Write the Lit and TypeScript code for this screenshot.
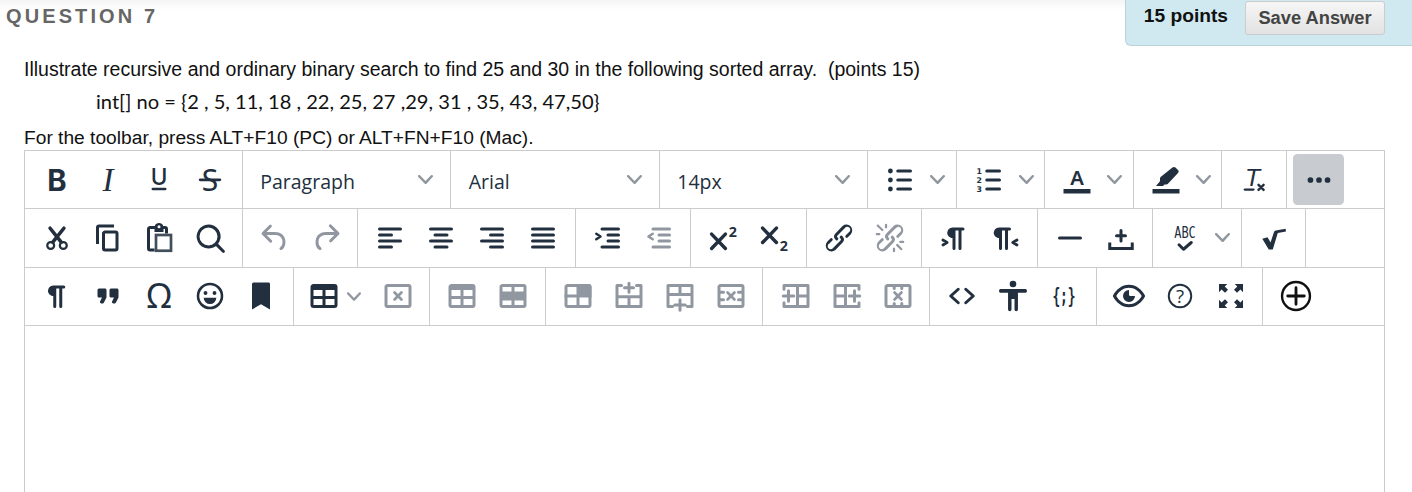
import { LitElement, html, svg, css } from 'lit';
import { customElement } from 'lit/decorators.js';

interface Item {
  i?: string;
  off?: boolean;
  chev?: boolean;
  label?: string;
  active?: boolean;
  cls?: string;
}

const bars = (list: number[][]) =>
  list.map(([x, y, w, h = 2]) => svg`<rect x=${x} y=${y} width=${w} height=${h} rx="1"/>`);

const line = (d: string, w = 2) =>
  svg`<path d=${d} fill="none" stroke="currentColor" stroke-width=${w} stroke-linecap="round" stroke-linejoin="round"/>`;

const label = (x: number, y: number, t: string, size: number, weight = 400, family = 'Open Sans') =>
  svg`<text x=${x} y=${y} text-anchor="middle" font-size=${size} font-weight=${weight} font-family=${family + ', sans-serif'}>${t}</text>`;

const grid = svg`<path fill-rule="evenodd" d="M19 4a2 2 0 012 2v12a2 2 0 01-2 2H5a2 2 0 01-2-2V6c0-1.1.9-2 2-2h14zM5 14v4h6v-4H5zm14 0h-6v4h6v-4zm0-6h-6v4h6V8zM5 12h6V8H5v4z"/>`;
const frame = svg`<path fill-rule="evenodd" d="M19 4a2 2 0 012 2v12a2 2 0 01-2 2H5a2 2 0 01-2-2V6c0-1.1.9-2 2-2h14zM5 6v12h14V6H5z"/>`;

const pilcrow = svg`<path d="M11 5h7a1 1 0 010 2h-1v12a1 1 0 01-2 0V7h-2v12a1 1 0 01-2 0v-7c-.5 0-1 0-1.4-.3A3.4 3.4 0 017.8 10a3.3 3.3 0 010-2.8 3.4 3.4 0 011.8-1.8L11 5z"/>`;

const icons: Record<string, unknown> = {
  bold: label(12, 19, 'B', 19.5, 700, 'Inter'),
  italic: svg`<text x="12" y="19" text-anchor="middle" font-size="22" font-style="italic" font-family="Liberation Serif, serif">I</text>`,
  underline: svg`${label(12, 15.6, 'U', 15, 500, 'Inter')}${bars([[7, 17.2, 10, 1.7]])}`,
  strike: svg`${label(12, 19, 'S', 20, 400, 'Noto Sans')}${bars([[4.5, 11, 15, 1.8]])}`,
  bullist: svg`<circle cx="5.6" cy="6" r="1.6"/><circle cx="5.6" cy="12" r="1.6"/><circle cx="5.6" cy="18" r="1.6"/>${bars([[9.5, 5, 10.5], [9.5, 11, 10.5], [9.5, 17, 10.5]])}`,
  numlist: svg`${label(5.5, 8, '1', 5.2, 700, 'DejaVu Sans')}${label(5.5, 14, '2', 5.2, 700, 'DejaVu Sans')}${label(5.5, 20, '3', 5.2, 700, 'DejaVu Sans')}${bars([[9.5, 5, 10.5], [9.5, 11, 10.5], [9.5, 17, 10.5]])}`,
  forecolor: svg`${label(12, 15.3, 'A', 13.5, 600, 'Noto Sans')}<rect x="3" y="18" width="18" height="3"/>`,
  hilite: svg`<path d="M16.300 3.700a1.500 1.500 0 012 0l1.700 1.700c.6.6.6 1.500 0 2l-6.700 7.100c-.3.3-.7.5-1.100.5H11l-1 1H5.300l2.700-3.200v-1.800c0-.4.2-.8.4-1z"/><rect x="3" y="18" width="18" height="3"/>`,
  removeformat: svg`<text x="11" y="16" text-anchor="middle" font-size="16.500" font-style="italic" font-family="Liberation Sans, sans-serif">T</text>${bars([[5, 17.600, 7.500, 1.500]])}${line('M15 15.200l3.400 3.400M18.400 15.200L15 18.600', 1.600)}`,
  more: svg`<circle cx="6.300" cy="12" r="1.900"/><circle cx="12" cy="12" r="1.900"/><circle cx="17.700" cy="12" r="1.900"/>`,
  cut: svg`${line('M16.600 5.500L9.200 14.800M7.400 5.500L14.800 14.800', 2.400)}<circle cx="7.800" cy="17" r="2.300" fill="none" stroke="currentColor" stroke-width="1.500"/><circle cx="16.200" cy="17" r="2.300" fill="none" stroke="currentColor" stroke-width="1.500"/>`,
  copy: svg`<path fill-rule="evenodd" d="M16 3H6a2 2 0 00-2 2v11h2V5h10V3zm1 4a2 2 0 012 2v10a2 2 0 01-2 2H10a2 2 0 01-2-2V9c0-1.1.9-2 2-2h7zm0 12V9h-7v10h7z"/>`,
  paste: svg`<path fill-rule="evenodd" d="M9.200 4a3 3 0 015.600 0H16a2 2 0 012 2v3h-2V6h-1v2H9V6H6v13h3v2H6a2 2 0 01-2-2V6c0-1.1.9-2 2-2h3.200zM12 3.500a1 1 0 100 2 1 1 0 000-2z"/><rect x="10" y="10" width="10" height="10.500" fill="none" stroke="currentColor" stroke-width="1.800" opacity=".85"/>`,
  search: svg`<path fill-rule="evenodd" d="M16 17.300a8 8 0 111.400-1.400l4.300 4.400a1 1 0 01-1.400 1.400l-4.400-4.300zm-5-.3a6 6 0 100-12 6 6 0 000 12z"/>`,
  undo: svg`<path d="M6.400 8H12c3.700 0 6.200 2 6.800 5.100.6 2.700-.4 5.600-2.300 6.800a1 1 0 01-1-1.800c1.100-.6 1.800-2.700 1.400-4.600-.5-2.100-2.100-3.500-4.900-3.500H6.400l3.300 3.300a1 1 0 11-1.400 1.400l-5-5a1 1 0 010-1.400l5-5a1 1 0 011.400 1.400L6.400 8z"/>`,
  redo: svg`<path d="M17.600 10H12c-2.800 0-4.400 1.400-4.900 3.500-.4 2 .3 4 1.400 4.600a1 1 0 11-1 1.800c-2-1.200-2.900-4.100-2.300-6.800.6-3 3-5.100 6.800-5.100h5.600l-3.300-3.300a1 1 0 111.400-1.400l5 5a1 1 0 010 1.400l-5 5a1 1 0 01-1.400-1.400l3.300-3.300z"/>`,
  left: bars([[4, 5, 16], [4, 9, 10], [4, 13, 16], [4, 17, 10]]),
  center: bars([[4, 5, 16], [7, 9, 10], [4, 13, 16], [7, 17, 10]]),
  right: bars([[4, 5, 16], [10, 9, 10], [4, 13, 16], [10, 17, 10]]),
  justify: bars([[4, 5, 16], [4, 9, 16], [4, 13, 16], [4, 17, 16]]),
  indent: svg`${bars([[7, 5, 13], [11, 9, 9], [11, 13, 9], [7, 17, 13]])}${line('M4.200 9.200L7 11l-2.800 1.800', 1.700)}`,
  outdent: svg`${bars([[7, 5, 13], [11, 9, 9], [11, 13, 9], [7, 17, 13]])}${line('M7.800 9.200L5 11M7.800 12.800L5 11', 1.700)}`,
  sup: svg`${line('M4.400 9.400L13.600 19M13.600 9.400L4.400 19', 2.300)}${label(18.500, 11, '2', 9.500, 700, 'Open Sans')}`,
  sub: svg`${line('M4.400 5.400L13.600 15M13.600 5.400L4.400 15', 2.300)}${label(18.500, 20.500, '2', 9.500, 700, 'Open Sans')}`,
  link: svg`<path d="M6.200 12.300a1 1 0 011.400 1.400l-2 2a2 2 0 102.600 2.800l4.800-4.800a1 1 0 000-1.400 1 1 0 111.400-1.300 2.900 2.900 0 010 4L9.600 20a3.900 3.900 0 01-5.500-5.500l2-2zm11.600-.6a1 1 0 01-1.400-1.400l2-2a2 2 0 10-2.600-2.800L11 10.300a1 1 0 000 1.400A1 1 0 119.600 13a2.900 2.900 0 010-4L14.400 4a3.900 3.900 0 015.500 5.500l-2 2z"/>`,
  unlink: svg`<path d="M6.200 12.300a1 1 0 011.400 1.400l-2.100 2a2 2 0 102.700 2.800l4.800-4.800a1 1 0 000-1.400 1 1 0 111.400-1.300 2.900 2.900 0 010 4L9.600 20a3.900 3.900 0 01-5.500-5.500l2-2zm11.600-.6a1 1 0 01-1.400-1.400l2.100-2a2 2 0 10-2.700-2.800L11 10.300a1 1 0 000 1.400A1 1 0 119.600 13a2.900 2.900 0 010-4L14.400 4a3.900 3.900 0 015.500 5.500l-2 2zM7.600 6.300a.8.8 0 01-1 1.100L3.300 4.200a.7.7 0 011-1l3.200 3.100zM5.100 8.600a.8.8 0 010 1.500H3a.8.8 0 010-1.500H5zm5-3.500a.8.8 0 01-1.500 0V3a.8.8 0 011.500 0v2zm6 11.800a.8.8 0 011-1l3.200 3.200a.8.8 0 01-1 1L16 17zm-2.200 2a.8.8 0 011.500 0V21a.8.8 0 01-1.500 0V19zm5-3.500a.7.7 0 110-1.500H21a.8.8 0 010 1.500H19z"/>`,
  ltr: svg`${pilcrow}${line('M4.600 13.400L7.400 15l-2.800 1.600', 1.900)}`,
  rtl: svg`<g transform="translate(-3 0)">${pilcrow}</g>${line('M20 13.400L17.200 15l2.800 1.600', 1.900)}`,
  hr: bars([[4, 11, 16, 2]]),
  insert: svg`${bars([[11, 6, 2, 9], [8, 9.500, 8, 2]])}<path d="M3.500 15h2v3h13v-3h2v5h-17z"/>`,
  spell: svg`<text x="12" y="12" text-anchor="middle" font-size="10.500" textLength="14.400" lengthAdjust="spacingAndGlyphs" font-family="DejaVu Sans Mono, monospace">ABC</text>${line('M8 16.500l3 3 5.200-4.500', 2)}`,
  sqrt: svg`<path d="M4.200 12.500l3.500-1 2 3.500 2.300-7c.2-.6.6-.9 1.200-1l6.500-1.200.3 1.800-5.500 1-3.300 11H8.500z"/>`,
  para: svg`<g transform="translate(-1.500 0)">${pilcrow}</g>`,
  quote: svg`<path d="M7.500 17h.9c.4 0 .7-.2.9-.6L11 13V8c0-.6-.4-1-1-1H6a1 1 0 00-1 1v4c0 .6.4 1 1 1h2l-1.300 2.700a1 1 0 00.8 1.300zm8 0h.9c.4 0 .7-.2.9-.6L19 13V8c0-.6-.4-1-1-1h-4a1 1 0 00-1 1v4c0 .6.4 1 1 1h2l-1.300 2.700a1 1 0 00.8 1.300z"/>`,
  omega: label(12, 20.200, 'Ω', 23, 400, 'Noto Sans'),
  emoji: svg`<circle cx="12" cy="12" r="8" fill="none" stroke="currentColor" stroke-width="1.700"/><circle cx="9" cy="10" r="1.300"/><circle cx="15" cy="10" r="1.300"/><path d="M7.800 13.200h8.400a4.200 4.200 0 01-8.400 0z"/>`,
  bookmark: svg`<path d="M6 4v17l6-3.500 6 3.500V4c0-.6-.4-1-1-1H7a1 1 0 00-1 1z"/>`,
  table: grid,
  tdel: svg`${frame}${line('M9.700 9.700l4.600 4.600M14.300 9.700l-4.600 4.600', 1.800)}`,
  tprops: grid,
  trow: svg`<path fill-rule="evenodd" d="M19 4a2 2 0 012 2v12a2 2 0 01-2 2H5a2 2 0 01-2-2V6c0-1.100.9-2 2-2h14zM5 6v3h6V6H5zm8 0v3h6V6h-6zM5 15v3h6v-3H5zm8 0v3h6v-3h-6z"/>`,
  tcell: svg`${frame}<path d="M3 11h18v2H3zM11 5h2v14h-2zM12 4h7a2 2 0 012 2v6h-9z"/>`,
  rowabove: svg`${line('M7 5H4v14h16V5h-3M4 12.500h16M12 12.500V19M12 3.500v6M9 6.500h6')}`,
  rowbelow: svg`${line('M7 19H4V5h16v14h-3M4 11h16M12 5v6M12 14.500v7M8.500 18h7')}`,
  rowdel: svg`${frame}${line('M5 9.500h2M5 14.500h2M17 9.500h2M17 14.500h2')}${line('M9.700 9.700l4.600 4.600M14.300 9.700l-4.600 4.600', 1.800)}`,
  colleft: svg`${line('M4 7.500V5h16v14H4v-2.500M13 5v14M13 12h7M3.500 12h7M7 8.500v7')}`,
  colright: svg`${line('M20 7.500V5H4v14h16v-2.500M11 5v14M4 12h7M13.500 12h7M17 8.500v7')}`,
  coldel: svg`${frame}${line('M9.500 5v2M14.500 5v2M9.500 17v2M14.500 17v2')}${line('M9.700 9.700l4.600 4.600M14.300 9.700l-4.600 4.600', 1.800)}`,
  code: line('M9.500 7.500L4.500 12l5 4.500M14.500 7.500l5 4.500-5 4.500', 2),
  a11y: svg`<circle cx="12" cy="4" r="2.200"/><path d="M3.700 7.400h16.600c.5 0 1 .5 1 1.200s-.5 1.200-1 1.200h-5V21a1 1 0 01-2.300 0v-7h-2v7a1 1 0 01-2.300 0V9.800h-5c-.5 0-1-.5-1-1.200s.5-1.200 1-1.200z"/>`,
  template: svg`<text x="12" y="16.800" text-anchor="middle" font-size="14" font-weight="700" textLength="15.500" lengthAdjust="spacingAndGlyphs" font-family="DejaVu Sans Mono, monospace">{;}</text>`,
  preview: svg`<path fill-rule="evenodd" d="M12 4.500c4.700 0 8.600 3.100 10.800 7.500-2.200 4.400-6.100 7.500-10.800 7.500S3.400 16.400 1.200 12C3.400 7.600 7.300 4.500 12 4.500zm0 2c-3.500 0-6.600 2.100-8.500 5.500 1.900 3.400 5 5.500 8.500 5.500s6.600-2.100 8.500-5.500c-1.900-3.400-5-5.500-8.500-5.500z"/><path d="M12 8a4 4 0 104 4h-3.400a1 1 0 01-.6-.6z"/>`,
  help: svg`<circle cx="12" cy="12" r="7.500" fill="none" stroke="currentColor" stroke-width="1.300"/>${label(12, 16.500, '?', 12.500, 400, 'Open Sans')}`,
  full: svg`<path d="M4 4h5.500L7.800 5.700 10 7.900 8 9.900 5.700 7.700 4 9.500zM20 4v5.500l-1.700-1.800-2.300 2.200-2-2 2.200-2.200L14.500 4zM4 20v-5.500l1.700 1.800L8 14.100l2 2-2.200 2.200L9.500 20zM20 20h-5.500l1.700-1.700L14 16.100l2-2 2.300 2.200 1.700-1.800z"/>`,
  plus: svg`<g color="#111"><circle cx="12" cy="12" r="9.300" fill="none" stroke="currentColor" stroke-width="1.600"/>${line('M12 6.500v11M6.500 12h11', 1.900)}</g>`,
};

const rows: Item[][][] = [
  [
    [{ i: 'bold' }, { i: 'italic' }, { i: 'underline' }, { i: 'strike' }],
    [{ label: 'Paragraph' }],
    [{ label: 'Arial' }],
    [{ label: '14px' }],
    [{ i: 'bullist', chev: true }],
    [{ i: 'numlist', chev: true }],
    [{ i: 'forecolor', chev: true }],
    [{ i: 'hilite', chev: true }],
    [{ i: 'removeformat' }],
    [{ i: 'more', active: true }],
  ],
  [
    [{ i: 'cut' }, { i: 'copy' }, { i: 'paste' }, { i: 'search' }],
    [{ i: 'undo', off: true }, { i: 'redo', off: true }],
    [{ i: 'left' }, { i: 'center' }, { i: 'right' }, { i: 'justify' }],
    [{ i: 'indent' }, { i: 'outdent', off: true }],
    [{ i: 'sup' }, { i: 'sub' }],
    [{ i: 'link' }, { i: 'unlink', off: true }],
    [{ i: 'ltr' }, { i: 'rtl' }],
    [{ i: 'hr' }, { i: 'insert' }],
    [{ i: 'spell', chev: true }],
    [{ i: 'sqrt' }],
  ],
  [
    [{ i: 'para' }, { i: 'quote' }, { i: 'omega' }, { i: 'emoji' }, { i: 'bookmark' }],
    [{ i: 'table', chev: true, cls: 'tbl' }, { i: 'tdel', off: true, cls: 'afterTbl' }],
    [{ i: 'tprops', off: true }, { i: 'trow', off: true }],
    [{ i: 'tcell', off: true }, { i: 'rowabove', off: true }, { i: 'rowbelow', off: true }, { i: 'rowdel', off: true }],
    [{ i: 'colleft', off: true }, { i: 'colright', off: true }, { i: 'coldel', off: true }],
    [{ i: 'code' }, { i: 'a11y' }, { i: 'template' }],
    [{ i: 'preview' }, { i: 'help' }, { i: 'full' }],
    [{ i: 'plus' }],
  ],
];

const chevron = html`<svg class="chev" viewBox="0 0 10 10" fill="currentColor"><path d="M8.700 2.200c.3-.3.8-.3 1 0 .4.4.4.9 0 1.200L5.700 7.800c-.3.3-.9.3-1.200 0L.2 3.400a.8.8 0 010-1.200c.3-.3.8-.3 1.100 0L5 6l3.700-3.800z"/></svg>`;

@customElement('app-root')
export class AppRoot extends LitElement {
  static styles = css`
    :host {
      display: block;
      height: 492px;
      overflow: hidden;
      background: #fff;
      font-family: 'Liberation Sans', Arial, sans-serif;
      color: #111;
    }
    .head {
      display: flex;
      justify-content: space-between;
      align-items: flex-start;
      height: 46px;
      background: linear-gradient(#f4f4f4, #fff 10px);
    }
    .title {
      padding: 4px 0 0 6px;
      font-size: 20px;
      line-height: 24px;
      font-weight: 700;
      letter-spacing: 3.1px;
      color: #666;
    }
    .points {
      display: flex;
      align-items: flex-start;
      justify-content: flex-end;
      gap: 17px;
      width: 287px;
      height: 46px;
      box-sizing: border-box;
      padding: 1px 27px 0 20px;
      background: #d0e8ef;
      border-bottom: 1px solid #bcd2d8;
      border-left: 1px solid #bcd2d8;
      border-bottom-left-radius: 6px;
    }
    .score {
      font-size: 19.200px;
      font-weight: 700;
      line-height: 30px;
      white-space: nowrap;
    }
    .save {
      flex: none;
      width: 140px;
      height: 34px;
      padding: 0;
      font: 700 18.300px 'Liberation Sans', Arial, sans-serif;
      color: #444;
      background: linear-gradient(#f6f6f6, #e2e2e2);
      border: 1px solid #ccc;
      border-radius: 3px;
    }
    .q {
      padding-left: 24px;
      font-size: 19.500px;
    }
    .q p {
      margin: 0;
    }
    .l1 {
      padding-top: 10px;
      line-height: 26px;
    }
    .l2 {
      padding: 6px 0 0 72px;
      line-height: 26px;
      font-family: Lato, sans-serif;
      font-size: 20.100px;
    }
    .l3 {
      padding-top: 12px;
      height: 24px;
      line-height: 24px;
      font-size: 19.200px;
    }
    .editor {
      width: 1361px;
      height: 400px;
      margin-left: 24px;
      box-sizing: border-box;
      border: 1px solid #ccc;
      color: #222f3e;
    }
    .row {
      display: flex;
      height: 58.330px;
      box-sizing: border-box;
      border-bottom: 1px solid #ccc;
    }
    .group {
      display: flex;
      align-items: center;
      padding: 0 5.750px 0 6.750px;
      border-right: 1px solid #ccc;
    }
    .row:last-child .group {
      padding-right: 5.950px;
    }
    .row:last-child .group:first-child {
      padding-right: 6.500px;
    }
    .group.last {
      border-right: 0;
    }
    .btn {
      display: flex;
      align-items: center;
      justify-content: center;
      width: 51px;
      height: 51px;
      border-radius: 4.500px;
    }
    .btn svg.ic {
      width: 36px;
      height: 36px;
      fill: currentColor;
      overflow: visible;
    }
    .btn.on {
      background: #c8cbcf;
    }
    .off {
      color: #9197a0;
    }
    .caret {
      display: flex;
      align-items: center;
      justify-content: center;
      width: 24px;
      color: #90979f;
    }
    .chev {
      display: block;
      width: 15px;
      height: 15px;
    }
    .tbl .btn {
      width: 46px;
    }
    .tbl .caret {
      width: 14px;
    }
    .split {
      display: flex;
      align-items: center;
    }
    .afterTbl {
      margin-left: 11px;
    }
    .select {
      display: flex;
      align-items: center;
      justify-content: space-between;
      width: 195px;
      height: 51px;
      box-sizing: border-box;
      padding: 0 11px;
      font: 400 19.500px 'Open Sans', sans-serif;
    }
    .select span {
      position: relative;
      top: 2px;
    }
    .select .chev {
      color: #90979f;
    }
  `;

  private renderItem(it: Item) {
    if (it.label) {
      return html`<div class="select"><span>${it.label}</span>${chevron}</div>`;
    }
    const btn = html`<div class="btn ${it.active ? 'on' : ''} ${it.off ? 'off' : ''} ${it.cls === 'afterTbl' ? 'afterTbl' : ''}">
      <svg class="ic" viewBox="0 0 24 24">${icons[it.i!]}</svg>
    </div>`;
    if (!it.chev) return btn;
    return html`<div class="split ${it.cls ?? ''}">${btn}<div class="caret">${chevron}</div></div>`;
  }

  render() {
    return html`
      <div class="head">
        <div class="title">QUESTION 7</div>
        <div class="points">
          <span class="score">15 points</span>
          <button class="save">Save Answer</button>
        </div>
      </div>
      <div class="q">
        <p class="l1">Illustrate recursive and ordinary binary search to find 25 and 30 in the following sorted array.&nbsp; (points 15)</p>
        <p class="l2">int[] no = {2 , 5, 11, 18 , 22, 25, 27 ,29, 31 , 35, 43, 47,50}</p>
        <p class="l3">For the toolbar, press ALT+F10 (PC) or ALT+FN+F10 (Mac).</p>
      </div>
      <div class="editor">
        ${rows.map(
          (row) => html`<div class="row">
            ${row.map(
              (g, n) => html`<div class="group ${n === row.length - 1 && row !== rows[1] ? 'last' : ''}">
                ${g.map((it) => this.renderItem(it))}
              </div>`,
            )}
          </div>`,
        )}
      </div>
    `;
  }
}
